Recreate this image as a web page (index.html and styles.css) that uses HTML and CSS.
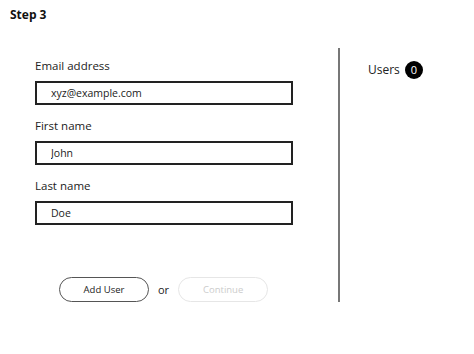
FILE: index.html
```html
<!DOCTYPE html>
<html lang="en">
<head>
    <meta charset="UTF-8">
    <meta name="viewport" content="width=device-width, initial-scale=1.0">
    <title>Step 3</title>
    <link rel="stylesheet" href="styles.css">
</head>
<body>

    <h1 class="step">Step 3</h1>

    <div class="main">
        <div class="form">
            <div class="field">
                <label for="email">Email address</label>
                <input type="text" id="email" value="xyz@example.com">
            </div>

            <div class="field">
                <label for="first">First name</label>
                <input type="text" id="first" value="John">
            </div>

            <div class="field">
                <label for="last">Last name</label>
                <input type="text" id="last" value="Doe">
            </div>

            <div class="actions">
                <button class="btn">Add User</button>
                <span class="or">or</span>
                <button class="btn btn-disabled" disabled>Continue</button>
            </div>
        </div>

        <div class="sidebar">
            <span class="users">Users</span>
            <span class="badge">0</span>
        </div>
    </div>

</body>
</html>
```

FILE: styles.css
```css
/* General Styles */
body {
    margin: 0;
    font-family: 'Open Sans', 'Noto Sans', sans-serif;
    color: #222;
    background: #fff;
}

.step {
    margin: 0;
    padding: 6px 10px 0;
    font-size: 12px;
    font-weight: 700;
    line-height: 18px;
    color: #111;
}

.main {
    display: flex;
    margin-top: 24px;
}

.form {
    width: 303px;
    padding: 9px 0 0 35px;
    box-sizing: border-box;
}

.field {
    margin-bottom: 12px;
}

.field label {
    display: block;
    font-size: 11.5px;
    line-height: 18px;
    margin-bottom: 6px;
    color: #222;
}

.field input {
    display: block;
    width: 258px;
    height: 24px;
    box-sizing: border-box;
    border: 2px solid #222;
    padding: 0 14px;
    font-family: inherit;
    font-size: 10.5px;
    color: #222;
    outline: none;
}

.actions {
    display: flex;
    align-items: center;
    gap: 9px;
    margin-top: 52px;
    padding-left: 24px;
}

.btn {
    width: 90px;
    height: 25px;
    border: 1.5px solid #555;
    border-radius: 13px;
    background: #fff;
    font-family: inherit;
    font-size: 9.5px;
    color: #222;
    padding: 0;
}

.btn-disabled {
    border-color: #e6e6e6;
    color: #ccc;
}

.or {
    font-size: 11px;
    color: #222;
}

.sidebar {
    display: flex;
    align-items: flex-start;
    border-left: 2px solid #777;
    margin-left: 35px;
    padding: 13px 0 0 28px;
    gap: 5px;
}

.users {
    font-size: 12px;
    line-height: 18px;
}

.badge {
    width: 18px;
    height: 18px;
    border-radius: 50%;
    background: #000;
    color: #fff;
    font-size: 11px;
    line-height: 18px;
    text-align: center;
}
```
